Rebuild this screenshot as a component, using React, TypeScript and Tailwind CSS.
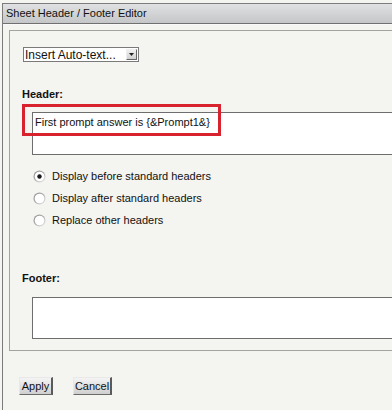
import React from "react";

const font = { fontFamily: '"Liberation Sans", Arial, sans-serif' };

function Radio({ checked }: { checked?: boolean }) {
  return (
    <svg width="13" height="13" viewBox="0 0 13 13" className="shrink-0">
      <defs>
        <linearGradient id="rb" x1="0" y1="0" x2="1" y2="1">
          <stop offset="0" stopColor="#8c8c8c" />
          <stop offset="0.5" stopColor="#b0b0b0" />
          <stop offset="1" stopColor="#f0f0f0" />
        </linearGradient>
      </defs>
      <circle cx="6.5" cy="6.5" r="6" fill="url(#rb)" />
      <circle cx="6.5" cy="6.5" r="4.8" fill="#ffffff" />
      {checked && <circle cx="6.5" cy="6.5" r="2.2" fill="#1a1a1a" />}
    </svg>
  );
}

function RadioRow({ label, checked }: { label: string; checked?: boolean }) {
  return (
    <div className="flex h-[22px] items-center pl-[23px]">
      <Radio checked={checked} />
      <span className="ml-[6px] text-[11px] text-[#111]">{label}</span>
    </div>
  );
}

function Button({ label, width }: { label: string; width: string }) {
  return (
    <div
      className={`flex h-[18px] ${width} items-center justify-center border-l border-t border-r-2 border-b border-l-[#e8e8e8] border-t-[#e8e8e8] border-r-[#5a5a5a] border-b-[#6a6a6a] bg-gradient-to-b from-[#f4f4f4] to-[#cfcfcf] text-[11px] text-[#111]`}
    >
      {label}
    </div>
  );
}

export default function App() {
  return (
    <div className="h-[410px] w-[392px] overflow-hidden bg-[#f4f4f0]" style={font}>
      <div className="ml-[2px] mt-[3px] h-[420px] w-[430px] border-l border-t border-[#7c7c7c]">
        {/* title bar */}
        <div className="flex h-[20px] items-center border-b border-[#707070] bg-gradient-to-b from-[#dfe1e3] to-[#c4c6c8] pl-[3px] text-[11px] text-[#111]">
          Sheet Header / Footer Editor
        </div>
        <div className="h-px bg-[#fafafa]" />

        {/* panel */}
        <div className="ml-[6px] mt-[5px] w-[440px] border border-[#a3a3a0] pb-[11px]">
          <div className="ml-[13px] mt-[16px] flex h-[15px] w-[116px] items-center border border-[#7a7a7a] bg-white">
            <span className="flex-1 pl-[1px] text-[12px] leading-none text-[#111]">Insert Auto-text...</span>
            <div className="mr-px flex h-[11px] w-[11px] items-center justify-center border border-r-[#666] border-b-[#666] border-l-[#eee] border-t-[#eee] bg-gradient-to-b from-[#f0f0f0] to-[#d0d0d0]">
              <svg width="5" height="3" viewBox="0 0 5 3">
                <path d="M0 0h5L2.5 3z" fill="#222" />
              </svg>
            </div>
          </div>

          <div className="ml-[12px] mt-[26px] text-[11px] font-bold leading-[13px] text-[#111]">Header:</div>

          <div className="relative ml-[22px] mt-[11px]">
            <div className="h-[43px] w-[400px] border border-[#6e6e6e] bg-white pl-[2px] pt-[3px] text-[11px] leading-[13px] text-[#111]">
              First prompt answer is {"{&Prompt1&}"}
            </div>
            <div className="pointer-events-none absolute left-[-10px] top-[-8px] h-[32px] w-[199px] border-[3px] border-[#d8232f]" />
          </div>

          <div className="mt-[10px]">
            <RadioRow label="Display before standard headers" checked />
            <RadioRow label="Display after standard headers" />
            <RadioRow label="Replace other headers" />
          </div>

          <div className="ml-[12px] mt-[41px] text-[11px] font-bold leading-[13px] text-[#111]">Footer:</div>

          <div className="ml-[22px] mt-[12px] h-[42px] w-[400px] border border-[#6e6e6e] bg-white" />
        </div>

        {/* buttons */}
        <div className="ml-[16px] mt-[26px] flex gap-[20px]">
          <Button label="Apply" width="w-[34px]" />
          <Button label="Cancel" width="w-[39px]" />
        </div>
      </div>
    </div>
  );
}
